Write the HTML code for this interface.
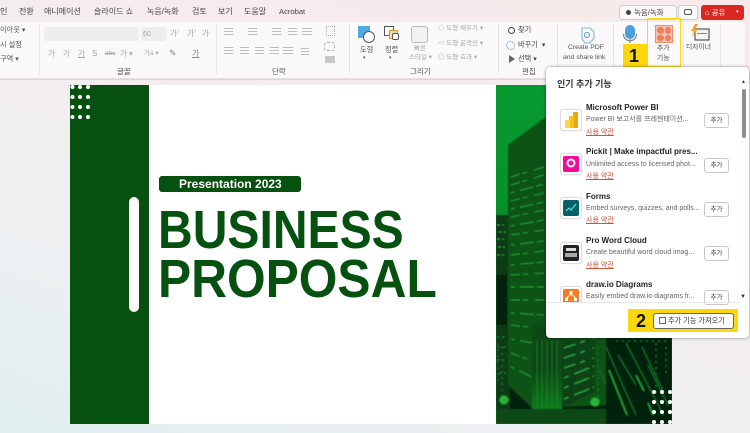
<!DOCTYPE html>
<html lang="ko"><head><meta charset="utf-8">
<style>
*{box-sizing:border-box}
html,body{margin:0;padding:0}
body{width:750px;height:433px;overflow:hidden;position:relative;background:#f3eeef;font-family:"Liberation Sans","Noto Sans CJK KR",sans-serif;color:#333}
#w{position:absolute;left:0;top:0;width:750px;height:433px;overflow:hidden;background:linear-gradient(20deg,#dfeeef 0,#eef0f2 30%,#f6ecee 70%,#f7e9e9 100%);filter:blur(.35px)}
.t{position:absolute;white-space:nowrap;line-height:1}
.a{position:absolute}
.g{color:#a5a5a5}
.s{font-size:7.2px;color:#555}
.tab{top:8px;font-size:8px;color:#444}
.add{position:absolute;left:704px;width:25px;height:15px;border:1px solid #c8c8c8;border-radius:3px;background:#fff;font-size:6.5px;text-align:center;line-height:13px;color:#444}
.ti{position:absolute;left:586px;font-size:8px;font-weight:bold;color:#222;white-space:nowrap;line-height:1}
.de{position:absolute;left:586px;font-size:7px;color:#666;white-space:nowrap;line-height:1}
.li{position:absolute;left:586px;font-size:7px;color:#c8553a;text-decoration:underline;white-space:nowrap;line-height:1}
.ic{position:absolute;left:560px;width:22px;height:22px;border:1px solid #ddd;border-radius:3px;background:#fff;padding:0;box-shadow:0 0 1px #ccc}
.sep{position:absolute;top:24px;width:1px;height:50px;background:#e8e5e5}
.lab{position:absolute;top:68px;font-size:7.5px;color:#555;line-height:1;white-space:nowrap}
.l{position:absolute;width:9px;height:9px;background:repeating-linear-gradient(180deg,#bdbdbd 0 1.2px,transparent 1.2px 3px)}
</style></head><body><div id="w">

<!-- tabs -->
<div class="t tab" style="left:0">인</div>
<div class="t tab" style="left:19px">전환</div>
<div class="t tab" style="left:44px">애니메이션</div>
<div class="t tab" style="left:94px">슬라이드 쇼</div>
<div class="t tab" style="left:147px">녹음/녹화</div>
<div class="t tab" style="left:192px">검토</div>
<div class="t tab" style="left:218px">보기</div>
<div class="t tab" style="left:244px">도움말</div>
<div class="t tab" style="left:279px;font-size:7.6px">Acrobat</div>

<div class="a" style="left:619px;top:5px;width:58px;height:15px;border:1px solid #ccc;border-radius:3px;background:#fbf8f8"></div>
<div class="a" style="left:626px;top:10px;width:5px;height:5px;border-radius:50%;background:#444"></div>
<div class="t" style="left:634px;top:8.5px;font-size:7.5px;color:#444">녹음/녹화</div>
<div class="a" style="left:678px;top:5px;width:20px;height:15px;border:1px solid #ccc;border-radius:3px;background:#fbf8f8"></div>
<div class="a" style="left:684px;top:9px;width:8px;height:6px;border:1px solid #555;border-radius:2px"></div>
<div class="a" style="left:701px;top:5px;width:43px;height:15px;border-radius:3px;background:#d8281f"></div>
<div class="t" style="left:705px;top:8.5px;font-size:7.5px;color:#fff">⌂ 공유</div>
<div class="t" style="left:736px;top:10px;font-size:5px;color:#fff">▾</div>

<!-- ribbon -->
<div class="a" style="left:0;top:22px;width:745px;height:56px;background:#fbf9f9;border-radius:0 5px 5px 0;box-shadow:0 1px 1px #e3dede"></div>
<div class="sep" style="left:39px"></div><div class="sep" style="left:216px"></div><div class="sep" style="left:349px"></div><div class="sep" style="left:498px"></div><div class="sep" style="left:557px"></div><div class="sep" style="left:613px"></div><div class="sep" style="left:683px"></div><div class="sep" style="left:720px"></div>

<div class="t s" style="left:0;top:26px">이아웃 ▾</div>
<div class="t s" style="left:0;top:41px">시 설정</div>
<div class="t s" style="left:0;top:55px">구역 ▾</div>

<div class="a" style="left:44px;top:27px;width:95px;height:14px;background:#eeeeee;border-radius:3px"></div>
<div class="a" style="left:141px;top:27px;width:26px;height:14px;background:#eeeeee;border-radius:3px"></div>
<div class="t g" style="left:143px;top:31px;font-size:7px">60</div>
<div class="t g" style="left:170px;top:30px;font-size:8px">가'</div>
<div class="t g" style="left:187px;top:30px;font-size:8px">가'</div>
<div class="t g" style="left:202px;top:30px;font-size:8px">가</div>
<div class="t g" style="left:48px;top:50px;font-size:7.5px">가</div><div class="t g" style="left:63px;top:50px;font-size:7.5px">가</div><div class="t g" style="left:78px;top:50px;font-size:7.5px;text-decoration:underline">가</div><div class="t g" style="left:92px;top:50px;font-size:8px">S</div>
<div class="t g" style="left:105px;top:51px;font-size:6.5px;text-decoration:line-through">abc</div>
<div class="t g" style="left:120px;top:50px;font-size:7.5px">가 ▾</div>
<div class="t g" style="left:144px;top:51px;font-size:6.5px">가a ▾</div>
<div class="t" style="left:169px;top:49px;font-size:9px;color:#888">✎</div>
<div class="t" style="left:192px;top:50px;font-size:8px;color:#888;text-decoration:underline">가</div>

<div class="l" style="left:224px;top:28px"></div><div class="l" style="left:248px;top:28px"></div><div class="l" style="left:272px;top:28px"></div><div class="l" style="left:288px;top:28px"></div><div class="l" style="left:302px;top:28px;width:10px"></div>
<div class="l" style="left:224px;top:47px"></div><div class="l" style="left:240px;top:47px"></div><div class="l" style="left:255px;top:47px"></div><div class="l" style="left:270px;top:47px"></div><div class="l" style="left:283px;top:47px;width:10px"></div><div class="l" style="left:301px;top:48px;width:8px;height:7px"></div>
<div class="a" style="left:326px;top:26px;width:9px;height:10px;border:1px dotted #b0b0b0"></div>
<div class="a" style="left:324px;top:42px;width:11px;height:9px;border:1px dashed #b0b0b0;border-radius:3px"></div>
<div class="a" style="left:325px;top:56px;width:10px;height:7px;background:#c8c8c8"></div>
<div class="lab" style="left:117px">글꼴</div>
<div class="lab" style="left:272px">단락</div>

<div class="a" style="left:358px;top:26px;width:12px;height:12px;background:#52a9e0"></div>
<div class="a" style="left:363px;top:31px;width:12px;height:12px;border-radius:50%;background:#fff;border:1.2px solid #555"></div>
<div class="t s" style="left:360px;top:46px">도형</div>
<div class="t" style="left:363px;top:56px;font-size:5px;color:#555">▾</div>
<div class="a" style="left:384px;top:26px;width:10px;height:10px;border:1.2px solid #555;background:#fff"></div>
<div class="a" style="left:389px;top:30px;width:9px;height:9px;border:1.2px solid #d39a35;background:#f3d9a5"></div>
<div class="a" style="left:392px;top:33px;width:7px;height:7px;border:1.2px solid #555;background:#fff;border-radius:2px"></div>
<div class="t s" style="left:385px;top:46px">정렬</div>
<div class="t" style="left:389px;top:56px;font-size:5px;color:#555">▾</div>
<div class="a" style="left:411px;top:26px;width:17px;height:17px;border:1.2px solid #b9b9b9;border-radius:3px;background:#f2f2f2"></div>
<div class="t g" style="left:414px;top:46px;font-size:6.5px">빠른</div>
<div class="t g" style="left:409px;top:55px;font-size:6.5px">스타일 ▾</div>
<div class="t g" style="left:438px;top:26px;font-size:6.5px">◇ 도형 채우기 ▾</div>
<div class="t g" style="left:438px;top:41px;font-size:6.5px">▱ 도형 윤곽선 ▾</div>
<div class="t g" style="left:438px;top:55px;font-size:6.5px">◎ 도형 효과 ▾</div>
<div class="lab" style="left:410px">그리기</div>

<div class="a" style="left:508px;top:27px;width:7px;height:7px;border:1px solid #444;border-radius:50%"></div>
<div class="t s" style="left:518px;top:26px;color:#444">찾기</div>
<div class="a" style="left:506px;top:41px;width:9px;height:9px;border:1.5px dotted #3d8fc7;border-radius:50%"></div>
<div class="t s" style="left:518px;top:41px;color:#444">바꾸기 &nbsp;▾</div>
<div class="a" style="left:509px;top:55px;width:0;height:0;border-left:6px solid #666;border-top:4px solid transparent;border-bottom:4px solid transparent"></div>
<div class="t s" style="left:518px;top:55px;color:#444">선택 ▾</div>
<div class="lab" style="left:522px">편집</div>

<svg class="a" style="left:579px;top:27px" width="18" height="17"><path d="M3 1h8l4 4v6l-4 5H6L3 12z" fill="none" stroke="#7fb6da" stroke-width="1.1"/><circle cx="8" cy="8" r="2.5" fill="none" stroke="#4a9bd0"/></svg>
<div class="t s" style="left:568px;top:45px;font-size:6.8px">Create PDF</div>
<div class="t s" style="left:563px;top:55px;font-size:6.8px">and share link</div>

<svg class="a" style="left:622px;top:24px" width="16" height="20"><rect x="3" y="1" width="10" height="14" rx="5" fill="#4d9fdc"/><path d="M1.5 10c0 9 13 9 13 0" fill="none" stroke="#888" stroke-width="1.2"/><path d="M8 15v4" stroke="#888" stroke-width="1.2"/></svg>

<!-- 추가 기능 highlight -->
<div class="a" style="left:647px;top:18px;width:34px;height:49px;border:1.5px solid #fbd70c"></div>
<div class="a" style="left:655px;top:25px;width:18px;height:18px;background:#f7c4b0;border:1px solid #ea8d6e;display:grid;grid-template-columns:1fr 1fr;gap:1px;padding:1px">
<i style="background:#ec7f5c;border-radius:50%"></i><i style="background:#ec7f5c;border-radius:50%"></i><i style="background:#ec7f5c;border-radius:50%"></i><i style="background:#ec7f5c;border-radius:50%"></i></div>
<div class="t s" style="left:657px;top:46px;font-size:6.8px">추가</div>
<div class="t s" style="left:657px;top:56px;font-size:6.8px">기능</div>
<div class="a" style="left:623px;top:44px;width:24px;height:23px;background:#fbd70c"></div>
<div class="t" style="left:629px;top:47px;font-size:18px;font-weight:bold;color:#111">1</div>

<svg class="a" style="left:689px;top:23px" width="22" height="20"><rect x="6" y="6" width="14" height="11" fill="#f4f4f4" stroke="#555" stroke-width="1.2"/><rect x="8" y="10" width="10" height="1" fill="#888"/><path d="M6 1l-4 7h3l-2 6 6-8H6l3-5z" fill="#efa22d"/></svg>
<div class="t s" style="left:686px;top:45px;font-size:6.8px">디자이너</div>

<!-- slide -->
<div class="a" style="left:0;top:79px;width:750px;height:1px;background:#dcd8d8"></div>
<div class="a" style="left:70px;top:85px;width:602px;height:339px;background:#fff"></div>
<div class="a" style="left:70px;top:85px;width:79px;height:339px;background:#065010"></div>
<svg class="a" style="left:70px;top:85px" width="22" height="36">
<g fill="#fff"><circle cx="2.5" cy="2" r="2"/><circle cx="10" cy="2" r="2"/><circle cx="18" cy="2" r="2"/><circle cx="2.5" cy="12" r="2"/><circle cx="10" cy="12" r="2"/><circle cx="18" cy="12" r="2"/><circle cx="2.5" cy="22" r="2"/><circle cx="10" cy="22" r="2"/><circle cx="18" cy="22" r="2"/><circle cx="2.5" cy="32" r="2"/><circle cx="10" cy="32" r="2"/><circle cx="18" cy="32" r="2"/></g></svg>
<div class="a" style="left:129px;top:197px;width:10px;height:115px;border-radius:5px;background:#fff"></div>
<div class="a" style="left:159px;top:176px;width:142px;height:16px;border-radius:3px;background:#065010"></div>
<div class="t" style="left:179px;top:178px;font-size:12px;font-weight:bold;color:#fff">Presentation 2023</div>
<div class="t" style="left:158px;top:202.5px;font-size:54px;font-weight:bold;color:#065010;transform-origin:0 0;transform:scaleX(.89)">BUSINESS</div>
<div class="t" style="left:158px;top:252px;font-size:54px;font-weight:bold;color:#065010;transform-origin:0 0;transform:scaleX(.92)">PROPOSAL</div>

<!-- building image -->
<svg class="a" style="left:496px;top:85px" width="176" height="339" viewBox="0 0 176 339">
<defs>
<linearGradient id="sky" x1="0" y1="0" x2="0" y2="1"><stop offset="0" stop-color="#079a30"/><stop offset=".7" stop-color="#09862a"/></linearGradient>
<linearGradient id="ctr" x1="0" y1="0" x2="0" y2="1"><stop offset=".55" stop-color="#0a4a16"/><stop offset="1" stop-color="#0c7a1c"/></linearGradient>
<filter id="b"><feGaussianBlur stdDeviation=".55"/></filter>
</defs>
<rect width="176" height="339" fill="url(#sky)"/>
<g filter="url(#b)">
<rect x="0" y="130" width="14" height="209" fill="#083a12"/>
<rect x="0" y="190" width="11" height="50" fill="#03240a"/>
<path d="M1 140h10M3 147h9M1 154h8M2 162h10M1 170h10" stroke="#2aa03a" stroke-width="1.3" stroke-dasharray="3 2 2 3"/>
<path d="M1 252h10M2 262h9M1 275h8M3 288h8" stroke="#1d8a2e" stroke-width="1.2" stroke-dasharray="2 3"/>
<rect x="14" y="250" width="162" height="89" fill="#03200a"/>
<path d="M12 60 L47 34 L60 28 L110 60 L110 320 L36 323 L12 300Z" fill="#0a5219"/>
<g stroke="#2c9a38" stroke-width="1" fill="none">
<path stroke-dasharray="9 3 5 7 13 4" d="M15 92L48 82M15 100L48 90M15 116L48 108M15 132L48 125M15 150L48 145M15 170L48 166M15 190L48 188M15 215L48 215M15 240L48 244M15 268L36 276"/>
<path stroke-dasharray="4 5 14 3 7 6" d="M15 108L48 99M15 124L48 117M15 141L48 135M15 160L48 156M15 180L48 177M15 202L48 202M15 228L48 230M15 254L48 260M15 282L36 292"/>
</g>
<rect x="36" y="240" width="30" height="84" fill="url(#ctr)"/>
<path d="M41 255v68M46 255v68M51 255v68M56 255v68M61 255v68" stroke="#2fb040" stroke-width=".8" opacity=".45"/>
<path d="M66 254L99 254L99 307L66 323Z" fill="#0a4216"/>
<g stroke="#33a03e" stroke-width="1.4" fill="none">
<path stroke-dasharray="12 5 5 8" d="M68 263L98 253M68 273L98 263M68 283L98 273"/>
<path stroke-dasharray="5 6 16 4" d="M68 293L98 281M68 303L98 291M68 314L98 302"/>
</g>
<g stroke="#0f6a24" stroke-width="1.4" fill="none">
<path d="M110 262L142 335M122 270L140 300M130 258L170 335M146 262L168 308M104 285L110 300M152 280L172 320"/>
</g>
<g stroke="#1c9a32" stroke-width="1.8" fill="none"><path d="M113 285L133 335M140 290L148 306M152 318L158 332"/></g>
<g stroke="#157a28" stroke-width="1" stroke-dasharray="2 4" fill="none"><path d="M2 258v40M6 262v50M102 262v50M160 258v50M170 262v30M120 256h50"/></g>
<rect x="0" y="324" width="110" height="15" fill="#0a4a16"/>
<rect x="110" y="330" width="66" height="9" fill="#03200a"/>
<circle cx="8" cy="315" r="4.5" fill="#2fd040" opacity=".8"/><circle cx="99" cy="317" r="4.5" fill="#2fd040" opacity=".8"/>
</g>
<g fill="#fff"><circle cx="158" cy="307" r="2"/><circle cx="166" cy="307" r="2"/><circle cx="174" cy="307" r="2"/><circle cx="158" cy="317" r="2"/><circle cx="166" cy="317" r="2"/><circle cx="174" cy="317" r="2"/><circle cx="158" cy="327" r="2"/><circle cx="166" cy="327" r="2"/><circle cx="174" cy="327" r="2"/><circle cx="158" cy="337" r="2"/><circle cx="166" cy="337" r="2"/><circle cx="174" cy="337" r="2"/></g>
</svg>

<!-- panel -->
<div class="a" style="left:546px;top:67px;width:203px;height:271px;background:#fff;border-radius:4px;box-shadow:0 0 3px rgba(0,0,0,.45)"></div>
<div class="t" style="left:557px;top:80px;font-size:9px;font-weight:bold;color:#333">인기 추가 기능</div>
<div class="a" style="left:742px;top:89px;width:4px;height:49px;background:#8d8d8d;border-radius:2px"></div>
<div class="t" style="left:741px;top:80px;font-size:5px;color:#333">▲</div>
<div class="t" style="left:740px;top:294px;font-size:6px;color:#333">▼</div>

<div class="ti" style="top:104px">Microsoft Power BI</div><div class="de" style="top:116px">Power BI 보고서를 프레젠테이션...</div><div class="li" style="top:129px">사용 약관</div><div class="add" style="top:113px">추가</div>
<div class="ic" style="top:109px"><svg width="20" height="20" style="display:block"><rect x="12" y="2" width="5" height="16" fill="#e8a90e"/><rect x="8" y="6" width="5" height="12" fill="#f3c21c"/><rect x="4" y="10" width="5" height="8" fill="#f8d84a"/></svg></div>

<div class="ti" style="top:148px">Pickit | Make impactful pres...</div><div class="de" style="top:161px">Unlimited access to licensed phot...</div><div class="li" style="top:173px">사용 약관</div><div class="add" style="top:158px">추가</div>
<div class="ic" style="top:153px"><svg width="20" height="20" style="display:block"><rect x="2" y="2" width="16" height="16" rx="2" fill="#f5089a"/><circle cx="10" cy="9" r="3.5" fill="none" stroke="#fff" stroke-width="2"/></svg></div>

<div class="ti" style="top:193px">Forms</div><div class="de" style="top:205px">Embed surveys, quizzes, and polls...</div><div class="li" style="top:217px">사용 약관</div><div class="add" style="top:202px">추가</div>
<div class="ic" style="top:197px"><svg width="20" height="20" style="display:block"><rect x="2" y="2" width="16" height="16" rx="2" fill="#06606b"/><path d="M5 13l3-3 2 2 5-6" stroke="#6ed" fill="none"/></svg></div>

<div class="ti" style="top:237px">Pro Word Cloud</div><div class="de" style="top:249px">Create beautiful word cloud imag...</div><div class="li" style="top:262px">사용 약관</div><div class="add" style="top:246px">추가</div>
<div class="ic" style="top:242px"><svg width="20" height="20" style="display:block"><rect x="2" y="2" width="16" height="16" rx="2" fill="#222"/><rect x="5" y="5" width="10" height="3" fill="#ddd"/><rect x="4" y="10" width="12" height="4" fill="#aaa"/></svg></div>

<div class="ti" style="top:281px">draw.io Diagrams</div><div class="de" style="top:293px">Easily embed draw.io diagrams fr...</div><div class="add" style="top:290px">추가</div>
<div class="a" style="left:560px;top:286px;width:22px;height:16px;border:1px solid #ddd;border-bottom:0;border-radius:3px 3px 0 0;overflow:hidden"><svg width="20" height="16" style="display:block"><rect x="2" y="2" width="16" height="16" rx="2" fill="#f57c1f"/><rect x="8.5" y="4" width="3" height="3" fill="#fff"/><rect x="4" y="11" width="3" height="3" fill="#fff"/><rect x="13" y="11" width="3" height="3" fill="#fff"/><path d="M10 7L5.5 11M10 7l4.5 4" stroke="#fff"/></svg></div>
<div class="a" style="left:546px;top:302px;width:195px;height:1px;background:#e8e8e8"></div>

<div class="a" style="left:628px;top:309px;width:110px;height:23px;background:#fbd70c"></div>
<div class="t" style="left:636px;top:312px;font-size:18px;font-weight:bold;color:#111">2</div>
<div class="a" style="left:653px;top:313px;width:81px;height:15.5px;background:#fff;border:1.5px solid #666;border-radius:3px"></div>
<div class="a" style="left:659px;top:317px;width:7px;height:7px;border:1px solid #666"></div>
<div class="t" style="left:668px;top:317px;font-size:7.2px;color:#333">추가 기능 가져오기</div>

</div></body></html>
